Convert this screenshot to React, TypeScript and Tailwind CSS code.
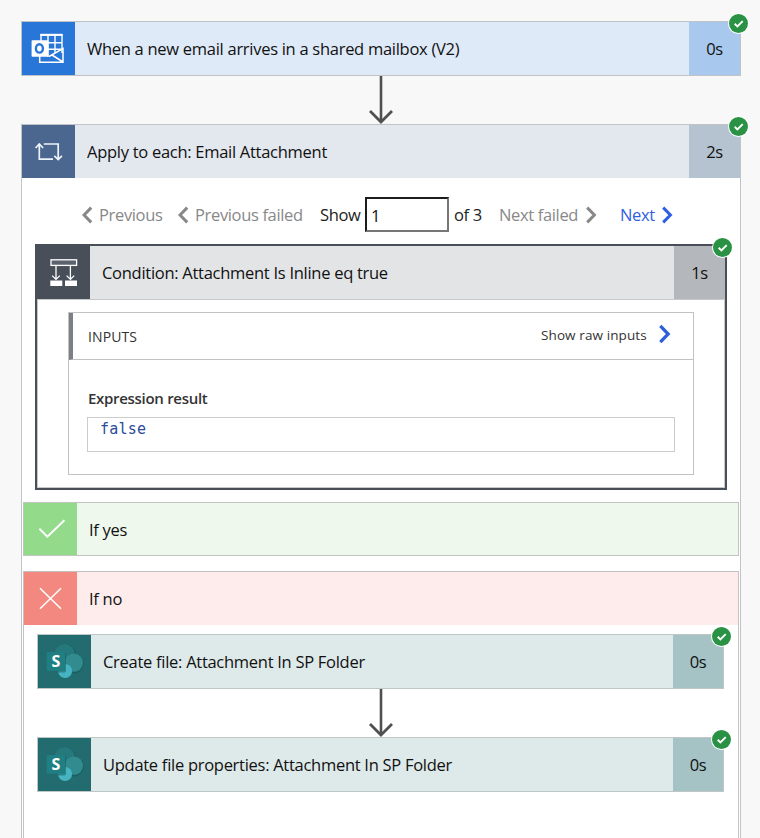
import type { ReactNode } from 'react';
import clsx from 'clsx';

const OutlookIcon = () => (
  <svg width="53" height="53" viewBox="0 0 53 53" fill="none" stroke="white">
    <path d="M19 13H40V31" strokeWidth="1.4" />
    <path d="M18.4 12.8H40.6" strokeWidth="2" />
    <path d="M19 12V19M26 13V35M33 13V31M19 20.8H40M26 27.3H39" strokeWidth="1.4" />
    <path d="M17.7 34V40.2H41V26.5L27 34.5M30 33L41 40" strokeWidth="1.5" />
    <rect x="9.6" y="18.3" width="16.8" height="16.5" rx="0.8" fill="white" stroke="none" />
    <ellipse cx="17.4" cy="26.4" rx="3.5" ry="4.2" stroke="#2876d7" strokeWidth="2.4" />
  </svg>
);

const LoopIcon = () => (
  <svg width="53" height="53" viewBox="0 0 53 53" fill="none" stroke="#eef3fb" strokeWidth="1.7">
    <path d="M31 34.2H17.3V19M13.6 23L17.3 19L21.1 23" />
    <path d="M21.8 19H36.2V34.6M32.3 30.8L36.2 34.6L39.9 30.8" />
  </svg>
);

const ConditionIcon = () => (
  <svg width="53" height="53" viewBox="0 0 53 53" fill="none" stroke="white">
    <rect x="14" y="13.8" width="25.6" height="5.6" strokeWidth="1.3" fill="#5d636c" />
    <path d="M19 20V33M33.4 20V33M15.2 29.6L19 33.4L22.8 29.6M29.6 29.6L33.4 33.4L37.2 29.6" strokeWidth="1.3" />
    <path d="M13.3 34.6h12v5.4h-12zM28 34.6h12v5.4h-12z" fill="white" stroke="none" />
  </svg>
);

const YesIcon = () => (
  <svg width="53" height="52" viewBox="0 0 53 52" fill="none" stroke="white" strokeWidth="1.9">
    <path d="M15.4 25.8L23.4 33.6L40.4 17.2" />
  </svg>
);

const NoIcon = () => (
  <svg width="53" height="53" viewBox="0 0 53 53" fill="none" stroke="white" strokeWidth="1.6">
    <path d="M16 16.2L37 36.8M37 16.2L16 36.8" />
  </svg>
);

const SharePointIcon = () => (
  <svg width="53" height="53" viewBox="0 0 53 53">
    <circle cx="27" cy="20" r="11" fill="#1c5f63" />
    <circle cx="36" cy="28.6" r="9.8" fill="#1c5f63" />
    <circle cx="26.6" cy="19.2" r="10.3" fill="#25797c" />
    <circle cx="35.9" cy="27.7" r="9.1" fill="#328c8f" />
    <circle cx="27.1" cy="36" r="7" fill="#46b4c0" />
    <path d="M20 18H28V35.8A1.6 1.6 0 0 1 26.4 37.4H20Z" fill="#1b5c60" opacity="0.55" />
    <rect x="8.7" y="17" width="18.4" height="18.7" rx="1.2" fill="#1f7f82" />
    <text x="17.8" y="32" textAnchor="middle" fill="white" fontFamily="Open Sans, sans-serif" fontWeight="700" fontSize="16">
      S
    </text>
  </svg>
);

const Chevron = ({ left, big, className }: { left?: boolean; big?: boolean; className?: string }) => (
  <svg
    width={big ? 12 : 11}
    height={big ? 20 : 18}
    viewBox="0 0 11 18"
    fill="none"
    stroke="currentColor"
    strokeWidth="3"
    className={clsx('shrink-0', className)}
  >
    <path d={left ? 'M9.2 1.6L2 9L9.2 16.4' : 'M1.2 1.6L8.4 9L1.2 16.4'} />
  </svg>
);

const SuccessBadge = ({ className }: { className: string }) => (
  <svg width="21" height="21" viewBox="0 0 21 21" fill="none" className={clsx('absolute z-10', className)}>
    <circle cx="10.5" cy="10.5" r="10.5" fill="white" />
    <circle cx="10.5" cy="10.5" r="9.5" fill="#2a9244" />
    <path d="M6.7 10.8L9.4 13.4L14.7 8.1" stroke="white" strokeWidth="1.9" />
  </svg>
);

const Arrow = () => (
  <svg width="26" height="48" viewBox="0 0 26 48" fill="none" stroke="#505050" className="shrink-0">
    <path d="M13 0V46" strokeWidth="2.6" />
    <path d="M2 35L13 46L24 35" strokeWidth="2.8" />
  </svg>
);

type HeaderProps = {
  icon: ReactNode;
  title: string;
  duration?: string;
  iconBg: string;
  bg: string;
  durationBg?: string;
};

const Header = ({ icon, title, duration, iconBg, bg, durationBg }: HeaderProps) => (
  <div className={clsx('flex h-[53px] items-stretch text-[16.5px] text-[#111]', bg)}>
    <div className={clsx('w-[53px] shrink-0', iconBg)}>{icon}</div>
    <div className="flex flex-1 items-center pt-[2px] pl-3 tracking-[-0.28px] whitespace-nowrap">{title}</div>
    {duration && (
      <div className={clsx('flex shrink-0 items-center justify-center pt-[2px] tracking-[-0.4px]', durationBg)}>
        {duration}
      </div>
    )}
  </div>
);

const Pager = () => (
  <div className="flex h-[66px] items-center pt-[7px] pl-[60px] text-[16.5px] tracking-[-0.35px] whitespace-nowrap text-[#888]">
    <Chevron left />
    <span className="ml-[6px] w-[79px] pt-[2px]">Previous</span>
    <Chevron left />
    <span className="ml-[6px] w-[125px] pt-[2px]">Previous failed</span>
    <span className="w-[45px] pt-[2px] text-[#222]">Show</span>
    <input
      defaultValue="1"
      className="h-[35px] w-[84px] border-2 border-t-[#1c1c1c] border-r-[#767676] border-b-[#767676] border-l-[#1c1c1c] bg-white pt-[2px] pl-[4px] text-[#111] outline-none"
    />
    <span className="ml-[5px] w-[45px] pt-[2px] text-[#222]">of 3</span>
    <span className="w-[87px] pt-[2px]">Next failed</span>
    <Chevron />
    <span className="ml-[23px] w-[42px] pt-[2px] text-[#2f5fe0]">Next</span>
    <Chevron className="text-[#2f5fe0]" />
  </div>
);

const InputsPanel = () => (
  <div className="h-[163px] border border-[#c2c2c2] bg-white">
    <div className="flex h-[47px] items-center border-b border-l-4 border-b-[#c2c2c2] border-l-[#7c8086] pr-[22px] pl-[15px] text-[#333]">
      <span className="flex-1 text-[14px] tracking-[0.1px]">INPUTS</span>
      <span className="w-[118px] pb-[2px] text-[13.5px] tracking-[0.1px] whitespace-nowrap">Show raw inputs</span>
      <Chevron big className="mb-[4px] text-[#2f5fd8]" />
    </div>
    <div className="px-[18px] pt-[26px]">
      <div className="flex h-[24px] items-center pl-[1px] text-[15px] font-semibold tracking-[-0.3px] text-[#333]">
        Expression result
      </div>
      <div className="mt-[7px] h-[35px] border border-[#ccc] pt-[1px] pl-3 font-['DejaVu_Sans_Mono',monospace] text-[15px] leading-[20px] tracking-[0.25px] text-[#2b4a9b]">
        false
      </div>
    </div>
  </div>
);

export default function App() {
  return (
    <div className="flex h-[838px] w-[760px] flex-col overflow-hidden bg-[#f8f8f8] pt-[21px] pl-[21px] font-['Open_Sans','Noto_Sans',sans-serif]">
      <div className="relative w-[720px] border border-[#c0c2c6]">
        <Header
          icon={<OutlookIcon />}
          title="When a new email arrives in a shared mailbox (V2)"
          duration="0s"
          iconBg="bg-[#2876d7]"
          bg="bg-[#deeaf8]"
          durationBg="w-[51px] bg-[#a9c8ee]"
        />
        <SuccessBadge className="-top-[9px] -right-[9px]" />
      </div>

      <div className="flex w-[720px] justify-center">
        <Arrow />
      </div>

      <div className="relative w-[720px] flex-1 border border-b-0 border-[#c2c3c6] bg-white">
        <Header
          icon={<LoopIcon />}
          title="Apply to each: Email Attachment"
          duration="2s"
          iconBg="bg-[#4b668f]"
          bg="bg-[#e3e7ee]"
          durationBg="w-[51px] bg-[#b5c2d0]"
        />
        <SuccessBadge className="-top-[9px] -right-[9px]" />

        <Pager />

        <div className="relative ml-[13px] h-[246px] w-[692px] border-2 border-[#484f58]">
          <Header
            icon={<ConditionIcon />}
            title="Condition: Attachment Is Inline eq true"
            duration="1s"
            iconBg="bg-[#484f58]"
            bg="bg-[#e3e4e6]"
            durationBg="w-[51px] bg-[#b4b7bb]"
          />
          <div className="h-[189px] border border-[#c6c8ca] pt-[12px] pr-[30px] pl-[30px]">
            <InputsPanel />
          </div>
          <SuccessBadge className="-top-[9px] -right-[8px]" />
        </div>

        <div className="mt-3 ml-px h-[54px] w-[716px] overflow-hidden border border-[#c2c4c0]">
          <Header icon={<YesIcon />} title="If yes" iconBg="bg-[#93da8b]" bg="bg-[#eef8ed]" />
        </div>

        <div className="mt-[15px] ml-px h-[300px] w-[716px] border border-[#c6c2c2]">
          <Header icon={<NoIcon />} title="If no" iconBg="bg-[#f2887f]" bg="bg-[#fdeceb]" />
          <div className="flex w-[713px] flex-col items-center pt-[9px]">
            <div className="relative w-[687px] border border-[#bfc6c6]">
              <Header
                icon={<SharePointIcon />}
                title="Create file: Attachment In SP Folder"
                duration="0s"
                iconBg="bg-[#226c70]"
                bg="bg-[#dee9e9]"
                durationBg="w-[50px] bg-[#a5c3c5]"
              />
              <SuccessBadge className="-top-[9px] -right-[9px]" />
            </div>
            <Arrow />
            <div className="relative w-[687px] border border-[#bfc6c6]">
              <Header
                icon={<SharePointIcon />}
                title="Update file properties: Attachment In SP Folder"
                duration="0s"
                iconBg="bg-[#226c70]"
                bg="bg-[#dee9e9]"
                durationBg="w-[50px] bg-[#a5c3c5]"
              />
              <SuccessBadge className="-top-[9px] -right-[9px]" />
            </div>
          </div>
        </div>
      </div>
    </div>
  );
}
